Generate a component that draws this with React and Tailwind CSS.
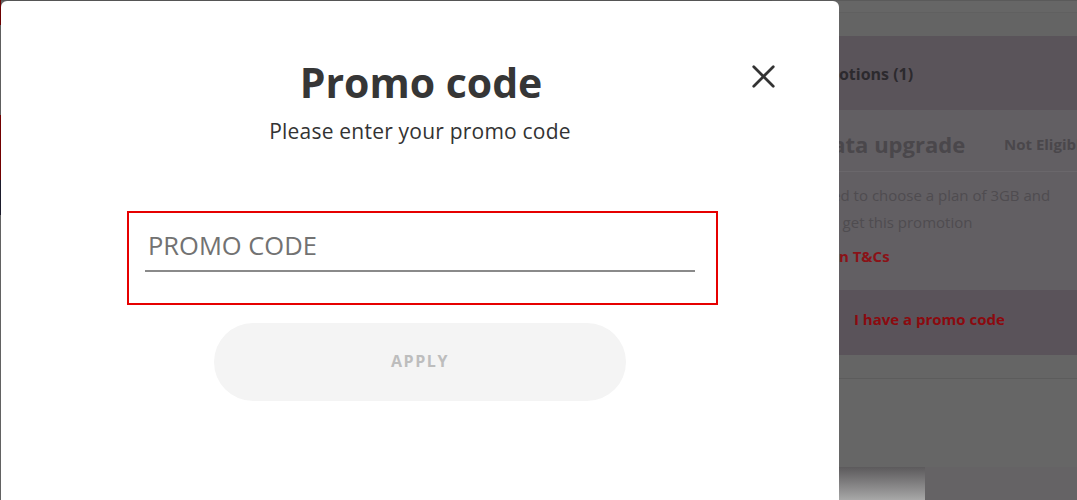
import { X } from "lucide-react";

function BackgroundPage() {
  return (
    <div className="flex h-[500px] w-[1077px] bg-[#656565]">
      {/* left side sits under the modal, only a sliver shows */}
      <div className="flex w-[1px] flex-col">
        <div className="h-[25px] bg-[#6b0000]" />
        <div className="h-[90px] bg-[#5e5e5e]" />
        <div className="h-[65px] bg-[#720000]" />
        <div className="h-[35px] bg-[#1b1b2c]" />
        <div className="flex-1 bg-[#626262]" />
      </div>
      <div className="w-[771px] border-t border-[#555555] bg-[#626262]" />

      <div className="flex flex-1 flex-col overflow-hidden">
        <div className="h-[12px] border-t border-[#5a5a5a] bg-[#666666]" />
        <div className="h-[24px] border-t border-[#606060] bg-[#646464]" />

        <div className="flex h-[74px] items-center bg-[#5a545a] pl-[24px] pt-[2px]">
          <span className="text-[16px] font-bold text-[#2c2a2e]">Promotions (1)</span>
        </div>

        <div className="h-[180px] bg-[#625f63]">
          <div className="flex h-[62px] items-center justify-between border-b border-[#6a676b] pl-[44px] pt-[8px]">
            <span className="text-[22px] font-bold text-[#4a474b]">Data upgrade</span>
            <span className="w-[73px] shrink-0 overflow-hidden whitespace-nowrap text-[15px] font-bold text-[#4a474b]">
              Not Eligible
            </span>
          </div>
          <div className="pt-[10px] text-[15px] leading-[27px] text-[#4f4c50]">
            <p className="whitespace-nowrap pl-[12px]">You need to choose a plan of 3GB and</p>
            <p className="whitespace-nowrap pl-[6px]">above to get this promotion</p>
            <p className="-ml-[3px] mt-[7px] whitespace-nowrap font-bold text-[#8a1217]">Promotion T&amp;Cs</p>
          </div>
        </div>

        <div className="flex h-[65px] items-center bg-[#5a535a] pb-[6px] pl-[82px]">
          <span className="text-[15px] font-bold text-[#8b0a0f]">I have a promo code</span>
        </div>

        <div className="h-[24px] border-b border-[#5c5c5c] bg-[#656565]" />
        <div className="h-[88px] bg-[#666666]" />
        <div className="flex flex-1">
          <div className="w-[153px] bg-gradient-to-b from-[#5c5a5c] to-[#a8a8a8]" />
          <div className="flex-1 bg-[#656365]" />
        </div>
      </div>
    </div>
  );
}

export default function App() {
  return (
    <div
      className="relative h-[500px] w-[1077px] overflow-hidden"
      style={{ fontFamily: '"Open Sans", "Noto Sans", sans-serif' }}
    >
      <BackgroundPage />

      {/* modal */}
      <div className="absolute left-[1px] top-[1px] h-[520px] w-[838px] rounded-t-[6px] bg-white pt-[57px]">
        <button className="absolute left-[743px] top-[56px] text-[#333333]">
          <X className="h-[39px] w-[39px]" strokeWidth={1.7} />
        </button>

        <div className="flex flex-col items-center">
          <h1 className="ml-[2px] text-[41px] font-bold leading-[48px] text-[#363636]">Promo code</h1>
          <p className="mt-[11px] text-[21px] tracking-[0.01em] leading-[28px] text-[#333333]">
            Please enter your promo code
          </p>

          <div className="ml-[5px] mt-[66px] h-[94px] w-[591px] border-2 border-[#e60000] pl-[16px] pr-[21px] pt-[12px]">
            <input
              type="text"
              placeholder="PROMO CODE"
              className="h-[47px] w-full border-b-2 border-[#8a8a8a] pb-[5px] pl-[3px] text-[25.5px] text-[#333333] placeholder-[#727272] outline-none"
            />
          </div>

          <button className="mt-[18px] h-[78px] w-[412px] rounded-full bg-[#f4f4f4] pb-[3px] text-[16px] font-bold tracking-[0.1em] text-[#bdbdbd]">
            APPLY
          </button>
        </div>
      </div>
    </div>
  );
}
